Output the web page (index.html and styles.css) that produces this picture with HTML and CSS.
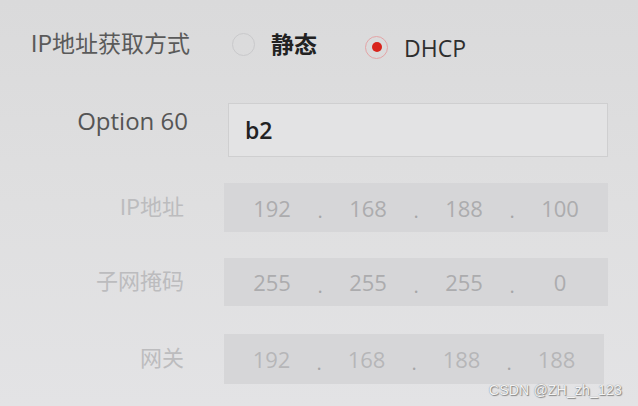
FILE: index.html
```html
<!DOCTYPE html>
<html lang="zh">
<head>
<meta charset="utf-8">
<link rel="stylesheet" href="styles.css">
</head>
<body>
<div class="form">
  <div class="row row-mode">
    <div class="label">IP地址获取方式</div>
    <div class="radios">
      <div class="radio"><span class="circle"></span><span class="rtext static">静态</span></div>
      <div class="radio"><span class="circle on"><span class="dot"></span></span><span class="rtext">DHCP</span></div>
    </div>
  </div>
  <div class="row row-opt">
    <div class="label">Option 60</div>
    <div class="input">b2</div>
  </div>
  <div class="row row-ip">
    <div class="label dis">IP地址</div>
    <div class="ipbox">
      <span class="seg">192</span><span class="sep">.</span>
      <span class="seg">168</span><span class="sep">.</span>
      <span class="seg">188</span><span class="sep">.</span>
      <span class="seg">100</span>
    </div>
  </div>
  <div class="row row-mask">
    <div class="label dis">子网掩码</div>
    <div class="ipbox">
      <span class="seg">255</span><span class="sep">.</span>
      <span class="seg">255</span><span class="sep">.</span>
      <span class="seg">255</span><span class="sep">.</span>
      <span class="seg">0</span>
    </div>
  </div>
  <div class="row row-gw">
    <div class="label dis">网关</div>
    <div class="ipbox">
      <span class="seg">192</span><span class="sep">.</span>
      <span class="seg">168</span><span class="sep">.</span>
      <span class="seg">188</span><span class="sep">.</span>
      <span class="seg">188</span>
    </div>
  </div>
</div>
<div class="watermark">CSDN @ZH_zh_123</div>
</body>
</html>
```
FILE: styles.css
```css
html, body {
  margin: 0;
  padding: 0;
}
body {
  width: 638px;
  height: 406px;
  overflow: hidden;
  position: relative;
  background: linear-gradient(180deg, #dadadb 0%, #dfdfe0 50%, #e3e3e5 100%);
  font-family: "Open Sans", "Noto Sans", "Noto Sans CJK SC", sans-serif;
  color: #555;
}
.form {
  padding-top: 24px;
  display: flex;
  flex-direction: column;
}
.row {
  display: grid;
  grid-template-columns: 188px 386px;
  column-gap: 36px;
  align-items: center;
}
.label {
  text-align: right;
  font-size: 23px;
  font-family: "Noto Sans CJK SC", "Noto Sans", sans-serif;
  color: #5a5a5a;
  white-space: nowrap;
}
.row-mode .label {
  margin-right: -2px;
  margin-top: -4px;
}
.label.dis {
  color: #bcbcbe;
  font-size: 22px;
  margin-top: -6px;
  margin-right: 4px;
}
.row-mode {
  height: 40px;
  margin-bottom: 39px;
}
.row-opt .label {
  font-family: "Open Sans", "Noto Sans", sans-serif;
  font-size: 24px;
  color: #555;
  margin-top: -20px;
}
.radios {
  display: flex;
  align-items: center;
  padding-left: 8px;
  gap: 48px;
}
.radio {
  display: flex;
  align-items: center;
  gap: 16px;
}
.circle {
  width: 23px;
  height: 23px;
  border-radius: 50%;
  border: 1.5px solid #c9c9cb;
  box-sizing: border-box;
  display: flex;
  align-items: center;
  justify-content: center;
  flex: none;
}
.circle.on {
  border-color: #e4a4a6;
  margin-top: 6px;
}
.dot {
  width: 10px;
  height: 10px;
  border-radius: 50%;
  background: #d8241c;
}
.rtext {
  font-size: 23px;
  color: #2e2e2e;
  font-weight: 600;
}
.rtext.static {
  font-family: "Noto Sans CJK SC", sans-serif;
  font-weight: 700;
  color: #222;
  margin-top: -2px;
}
.radio:last-child .rtext {
  margin-top: 8px;
  font-weight: 500;
}
.input {
  height: 54px;
  box-sizing: border-box;
  border: 1.5px solid #cfcfd0;
  background: #e3e3e4;
  font-size: 23px;
  color: #222;
  font-weight: 600;
  display: flex;
  align-items: center;
  padding-left: 16px;
  margin-left: 4px;
  width: 380px;
}
.row-opt {
  margin-bottom: 26px;
}
.ipbox {
  height: 49px;
  background: #d6d6d8;
  display: flex;
  align-items: center;
  width: 384px;
}
.seg {
  flex: 1;
  text-align: center;
  font-size: 22px;
  color: #acacae;
}
.sep {
  width: 0;
  display: flex;
  justify-content: center;
  font-size: 20px;
  color: #a6a6a8;
  margin-top: 6px;
}
.row-ip {
  margin-bottom: 26px;
}
.row-mask {
  margin-bottom: 28px;
}
.row-mask .ipbox {
  height: 48px;
}
.row-gw .ipbox {
  height: 50px;
  width: 380px;
}
.row-gw .seg {
  color: #b6b6b8;
}
.watermark {
  position: absolute;
  right: 16px;
  bottom: 8px;
  font-family: "Liberation Sans", Arial, sans-serif;
  font-size: 14px;
  color: #f4f4f4;
  text-shadow: 0 0 1px #777, 1px 1px 1px #888;
  letter-spacing: 0.2px;
}
```
